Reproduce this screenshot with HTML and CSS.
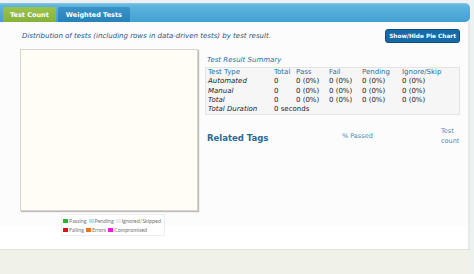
FILE: index.html
```html
<!DOCTYPE html>
<html lang="en">
<head>
<meta charset="UTF-8">
<title>Test Results</title>
<link rel="stylesheet" href="styles.css">
</head>
<body>

<div id="report">
  <div class="tab-bar">
    <div class="tab tab-active">Test Count</div>
    <div class="tab">Weighted Tests</div>
  </div>

  <div class="content">
    <div class="panel">
      <div class="intro-row">
        <div class="intro">Distribution of tests (including rows in data-driven tests) by test result.</div>
        <button class="toggle-btn">Show/Hide Pie Chart</button>
      </div>

      <div class="columns">
        <div class="chart-col">
          <div class="pie-box"></div>
          <div class="legend">
            <div class="legend-row">
              <span class="key"><i class="sw passing"></i>Passing</span>
              <span class="key"><i class="sw pending"></i>Pending</span>
              <span class="key"><i class="sw ignored"></i>Ignored/Skipped</span>
            </div>
            <div class="legend-row">
              <span class="key"><i class="sw failing"></i>Failing</span>
              <span class="key"><i class="sw errors"></i>Errors</span>
              <span class="key"><i class="sw compromised"></i>Compromised</span>
            </div>
          </div>
        </div>

        <div class="summary-col">
          <div class="summary-title">Test Result Summary</div>
          <table class="summary">
            <tr>
              <th class="c-type">Test Type</th><th class="c-total">Total</th><th class="c-pass">Pass</th>
              <th class="c-fail">Fail</th><th class="c-pend">Pending</th><th>Ignore/Skip</th>
            </tr>
            <tr><td class="it">Automated</td><td>0</td><td>0 (0%)</td><td>0 (0%)</td><td>0 (0%)</td><td>0 (0%)</td></tr>
            <tr><td class="it">Manual</td><td>0</td><td>0 (0%)</td><td>0 (0%)</td><td>0 (0%)</td><td>0 (0%)</td></tr>
            <tr><td class="it">Total</td><td>0</td><td>0 (0%)</td><td>0 (0%)</td><td>0 (0%)</td><td>0 (0%)</td></tr>
            <tr><td class="it">Total Duration</td><td colspan="5">0 seconds</td></tr>
          </table>

          <div class="tags-head">
            <div class="tags-title">Related Tags</div>
            <div class="tags-passed">% Passed</div>
            <div class="tags-count">Test<br>count</div>
          </div>
        </div>
      </div>
    </div>
  </div>

  <div class="footer"></div>
</div>

</body>
</html>
```

FILE: styles.css
```css
body {
  margin: 0;
  font-family: "DejaVu Sans", Verdana, sans-serif;
  font-size: 7px;
  color: #222;
  background-color: #eef1f1;
}
#report {
  width: 470px;
  height: 274px;
  display: flex;
  flex-direction: column;
}
.tab-bar {
  margin-top: 3px;
  height: 19px;
  display: flex;
  align-items: flex-end;
  gap: 2px;
  padding-left: 3px;
  border-radius: 0 5px 5px 0;
  background: linear-gradient(#82c7e6 0px, #5cb3dc 3px, #44a0d2 100%);
}
.tab {
  height: 16px;
  line-height: 16px;
  margin-bottom: -1px;
  padding: 0 8px;
  color: #fff;
  font-weight: bold;
  font-size: 6.5px;
  background: linear-gradient(#3a93c6, #2681b8);
  border-radius: 2px 2px 0 0;
}
.tab-active {
  padding: 0 7px;
  background: linear-gradient(#9cc24c, #84b13a);
}
.content {
  background-color: #fff;
  height: 227px;
  border-right: 2px solid #e6eaea;
}
.panel {
  background-color: #fcfcfc;
  height: 198px;
  border-radius: 0 0 4px 4px;
  padding-top: 6px;
}
.intro-row {
  display: flex;
  justify-content: space-between;
  align-items: center;
  padding: 0 8px 0 22px;
}
.intro {
  font-style: italic;
  color: #1f5580;
}
.toggle-btn {
  font-family: "DejaVu Sans", Verdana, sans-serif;
  font-size: 5.8px;
  font-weight: bold;
  color: #fff;
  background: #176aa8;
  border: 1px solid #0e4f80;
  border-radius: 3px;
  height: 14px;
  padding: 0 3px;
  margin-top: 1px;
}
.columns {
  display: flex;
  margin-top: 6px;
}
.chart-col {
  width: 185px;
  padding-left: 20px;
}
.pie-box {
  width: 176px;
  height: 160px;
  background-color: #fffdf6;
  border: 1px solid #d6d4cc;
  box-shadow: 1px 1px 1px #bdbdbd;
}
.legend {
  margin: 3px 0 0 41px;
  width: 100px;
  padding: 1px 1px;
  border: 1px solid #eee;
  font-family: Lato, "Liberation Sans", sans-serif;
  font-size: 5.4px;
  color: #777;
  background: #fff;
}
.legend-row {
  display: flex;
  gap: 2px;
  height: 9px;
  align-items: center;
}
.key {
  display: flex;
  align-items: center;
}
.sw {
  display: inline-block;
  width: 5px;
  height: 4px;
  margin-right: 1px;
}
.passing { background: #2cb52c; }
.pending { background: #aee6ee; }
.ignored { background: #ececec; }
.failing { background: #dc1020; }
.errors { background: #ee7020; }
.compromised { background: #e81ce8; }
.summary-col {
  width: 255px;
}
.summary-title {
  font-style: italic;
  color: #2a6fa2;
  padding-left: 2px;
  margin-top: 7px;
}
.summary {
  margin-top: 3px;
  width: 255px;
  border-collapse: collapse;
  background-color: #f6f6f6;
  border: 1px solid #e4e4e4;
}
.summary th, .summary td {
  text-align: left;
  font-weight: normal;
  padding: 0 0 0 2px;
  height: 9.3px;
  line-height: 9.3px;
  white-space: nowrap;
}
.summary th {
  color: #2a6fa2;
}
.summary .it {
  font-style: italic;
}
.c-type { width: 64px; }
.c-total { width: 20px; }
.c-pass { width: 31px; }
.c-fail { width: 31px; }
.c-pend { width: 38px; }
.tags-head {
  display: flex;
  align-items: center;
  margin-top: 15px;
  padding-left: 2px;
}
.tags-title {
  width: 135px;
  font-weight: bold;
  font-size: 8.5px;
  color: #2a6a98;
}
.tags-passed {
  width: 99px;
  color: #4a8ab8;
  font-size: 6.5px;
  margin-top: -5px;
}
.tags-count {
  color: #4a8ab8;
  font-size: 6.5px;
  line-height: 10px;
  margin-top: -4px;
}
.footer {
  flex: 1;
  background-color: #f0f1e9;
  border-top: 1px solid #e2e3dc;
}
```
